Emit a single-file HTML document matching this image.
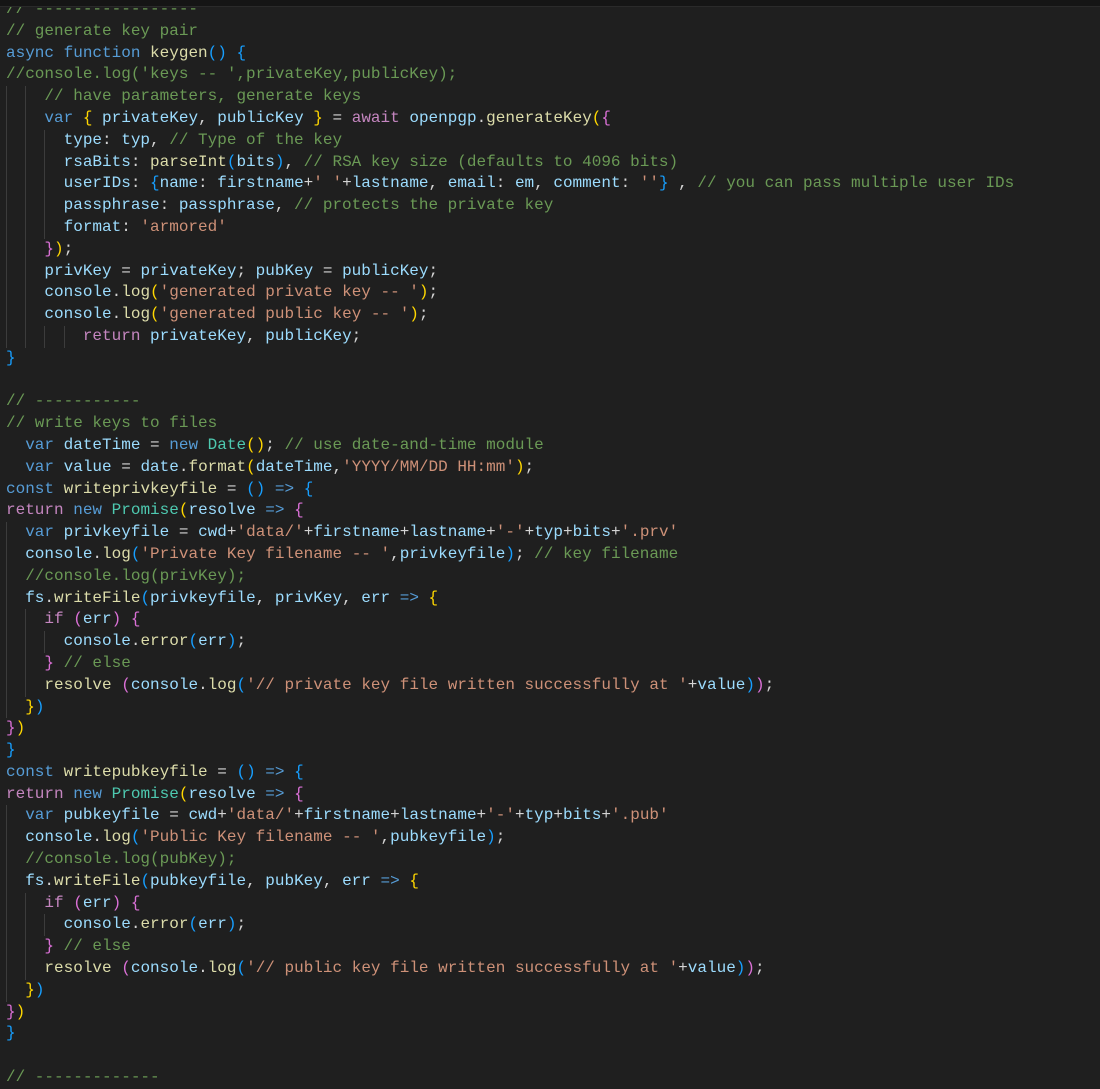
<!DOCTYPE html>
<html><head><meta charset="utf-8">
<style>
html,body{margin:0;padding:0;background:#1f1f1f;width:1100px;height:1086px;overflow:hidden}
.top{position:absolute;left:0;top:0;width:1100px;height:6px;background:#151515;border-bottom:1px solid #2a2a2a;z-index:2}
pre{position:absolute;left:6px;top:-1px;margin:0;font-family:"Liberation Mono",monospace;font-size:16px;line-height:21.8px;color:#d4d4d4;white-space:pre}
.c{color:#6a9955}.k{color:#569cd6}.p{color:#c586c0}.v{color:#9cdcfe}.f{color:#dcdcaa}.s{color:#ce9178}.t{color:#4ec9b0}
.b1{color:#ffd700}.b2{color:#da70d6}.b3{color:#179fff}
.g{display:inline-block;width:2ch;box-shadow:inset 1px 0 0 #3c3c3c;height:21.8px;vertical-align:top}
</style></head><body>
<div class="top"></div>
<pre><span class="c">// -----------------</span>
<span class="c">// generate key pair</span>
<span class="k">async</span> <span class="k">function</span> <span class="f">keygen</span><span class="b3">()</span> <span class="b3">{</span>
<span class="c">//console.log('keys -- ',privateKey,publicKey);</span>
<span class="g"></span><span class="g"></span><span class="c">// have parameters, generate keys</span>
<span class="g"></span><span class="g"></span><span class="k">var</span> <span class="b1">{</span> <span class="v">privateKey</span>, <span class="v">publicKey</span> <span class="b1">}</span> = <span class="p">await</span> <span class="v">openpgp</span>.<span class="f">generateKey</span><span class="b1">(</span><span class="b2">{</span>
<span class="g"></span><span class="g"></span><span class="g"></span><span class="v">type</span>: <span class="v">typ</span>, <span class="c">// Type of the key</span>
<span class="g"></span><span class="g"></span><span class="g"></span><span class="v">rsaBits</span>: <span class="f">parseInt</span><span class="b3">(</span><span class="v">bits</span><span class="b3">)</span>, <span class="c">// RSA key size (defaults to 4096 bits)</span>
<span class="g"></span><span class="g"></span><span class="g"></span><span class="v">userIDs</span>: <span class="b3">{</span><span class="v">name</span>: <span class="v">firstname</span>+<span class="s">' '</span>+<span class="v">lastname</span>, <span class="v">email</span>: <span class="v">em</span>, <span class="v">comment</span>: <span class="s">''</span><span class="b3">}</span> , <span class="c">// you can pass multiple user IDs</span>
<span class="g"></span><span class="g"></span><span class="g"></span><span class="v">passphrase</span>: <span class="v">passphrase</span>, <span class="c">// protects the private key</span>
<span class="g"></span><span class="g"></span><span class="g"></span><span class="v">format</span>: <span class="s">'armored'</span>
<span class="g"></span><span class="g"></span><span class="b2">}</span><span class="b1">)</span>;
<span class="g"></span><span class="g"></span><span class="v">privKey</span> = <span class="v">privateKey</span>; <span class="v">pubKey</span> = <span class="v">publicKey</span>;
<span class="g"></span><span class="g"></span><span class="v">console</span>.<span class="f">log</span><span class="b1">(</span><span class="s">'generated private key -- '</span><span class="b1">)</span>;
<span class="g"></span><span class="g"></span><span class="v">console</span>.<span class="f">log</span><span class="b1">(</span><span class="s">'generated public key -- '</span><span class="b1">)</span>;
<span class="g"></span><span class="g"></span><span class="g"></span><span class="g"></span><span class="p">return</span> <span class="v">privateKey</span>, <span class="v">publicKey</span>;
<span class="b3">}</span>

<span class="c">// -----------</span>
<span class="c">// write keys to files</span>
  <span class="k">var</span> <span class="v">dateTime</span> = <span class="k">new</span> <span class="t">Date</span><span class="b1">()</span>; <span class="c">// use date-and-time module</span>
  <span class="k">var</span> <span class="v">value</span> = <span class="v">date</span>.<span class="f">format</span><span class="b1">(</span><span class="v">dateTime</span>,<span class="s">'YYYY/MM/DD HH:mm'</span><span class="b1">)</span>;
<span class="k">const</span> <span class="f">writeprivkeyfile</span> = <span class="b3">()</span> <span class="k">=&gt;</span> <span class="b3">{</span>
<span class="p">return</span> <span class="k">new</span> <span class="t">Promise</span><span class="b1">(</span><span class="v">resolve</span> <span class="k">=&gt;</span> <span class="b2">{</span>
<span class="g"></span><span class="k">var</span> <span class="v">privkeyfile</span> = <span class="v">cwd</span>+<span class="s">'data/'</span>+<span class="v">firstname</span>+<span class="v">lastname</span>+<span class="s">'-'</span>+<span class="v">typ</span>+<span class="v">bits</span>+<span class="s">'.prv'</span>
<span class="g"></span><span class="v">console</span>.<span class="f">log</span><span class="b3">(</span><span class="s">'Private Key filename -- '</span>,<span class="v">privkeyfile</span><span class="b3">)</span>; <span class="c">// key filename</span>
<span class="g"></span><span class="c">//console.log(privKey);</span>
<span class="g"></span><span class="v">fs</span>.<span class="f">writeFile</span><span class="b3">(</span><span class="v">privkeyfile</span>, <span class="v">privKey</span>, <span class="v">err</span> <span class="k">=&gt;</span> <span class="b1">{</span>
<span class="g"></span><span class="g"></span><span class="p">if</span> <span class="b2">(</span><span class="v">err</span><span class="b2">)</span> <span class="b2">{</span>
<span class="g"></span><span class="g"></span><span class="g"></span><span class="v">console</span>.<span class="f">error</span><span class="b3">(</span><span class="v">err</span><span class="b3">)</span>;
<span class="g"></span><span class="g"></span><span class="b2">}</span> <span class="c">// else</span>
<span class="g"></span><span class="g"></span><span class="f">resolve</span> <span class="b2">(</span><span class="v">console</span>.<span class="f">log</span><span class="b3">(</span><span class="s">'// private key file written successfully at '</span>+<span class="v">value</span><span class="b3">)</span><span class="b2">)</span>;
<span class="g"></span><span class="b1">}</span><span class="b3">)</span>
<span class="b2">}</span><span class="b1">)</span>
<span class="b3">}</span>
<span class="k">const</span> <span class="f">writepubkeyfile</span> = <span class="b3">()</span> <span class="k">=&gt;</span> <span class="b3">{</span>
<span class="p">return</span> <span class="k">new</span> <span class="t">Promise</span><span class="b1">(</span><span class="v">resolve</span> <span class="k">=&gt;</span> <span class="b2">{</span>
<span class="g"></span><span class="k">var</span> <span class="v">pubkeyfile</span> = <span class="v">cwd</span>+<span class="s">'data/'</span>+<span class="v">firstname</span>+<span class="v">lastname</span>+<span class="s">'-'</span>+<span class="v">typ</span>+<span class="v">bits</span>+<span class="s">'.pub'</span>
<span class="g"></span><span class="v">console</span>.<span class="f">log</span><span class="b3">(</span><span class="s">'Public Key filename -- '</span>,<span class="v">pubkeyfile</span><span class="b3">)</span>;
<span class="g"></span><span class="c">//console.log(pubKey);</span>
<span class="g"></span><span class="v">fs</span>.<span class="f">writeFile</span><span class="b3">(</span><span class="v">pubkeyfile</span>, <span class="v">pubKey</span>, <span class="v">err</span> <span class="k">=&gt;</span> <span class="b1">{</span>
<span class="g"></span><span class="g"></span><span class="p">if</span> <span class="b2">(</span><span class="v">err</span><span class="b2">)</span> <span class="b2">{</span>
<span class="g"></span><span class="g"></span><span class="g"></span><span class="v">console</span>.<span class="f">error</span><span class="b3">(</span><span class="v">err</span><span class="b3">)</span>;
<span class="g"></span><span class="g"></span><span class="b2">}</span> <span class="c">// else</span>
<span class="g"></span><span class="g"></span><span class="f">resolve</span> <span class="b2">(</span><span class="v">console</span>.<span class="f">log</span><span class="b3">(</span><span class="s">'// public key file written successfully at '</span>+<span class="v">value</span><span class="b3">)</span><span class="b2">)</span>;
<span class="g"></span><span class="b1">}</span><span class="b3">)</span>
<span class="b2">}</span><span class="b1">)</span>
<span class="b3">}</span>

<span class="c">// -------------</span></pre>
</body></html>
